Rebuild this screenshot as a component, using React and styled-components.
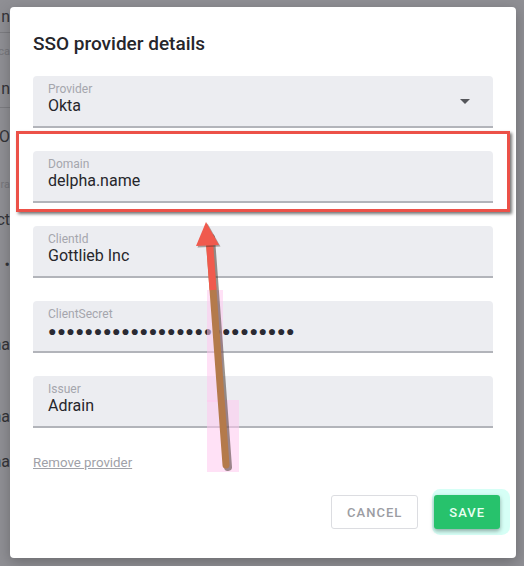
import React from 'react';
import styled, { createGlobalStyle } from 'styled-components';

const Global = createGlobalStyle`
  html, body { margin: 0; padding: 0; }
  body { font-family: Roboto, "Liberation Sans", sans-serif; }
`;

const Screen = styled.div`
  position: relative;
  width: 524px;
  height: 566px;
  overflow: hidden;
  background: #8f8f94;
`;

const BgColumn = styled.div`
  position: absolute;
  left: 0;
  top: 0;
  width: 10px;
  height: 566px;
  overflow: hidden;
  display: flex;
  flex-direction: column;
`;

const BgItem = styled.div`
  height: ${p => p.h}px;
  display: flex;
  align-items: center;
  justify-content: flex-end;
  white-space: nowrap;
  font-size: ${p => p.small ? 11 : 16}px;
  color: ${p => p.small ? '#76767b' : '#343438'};
  border-bottom: ${p => p.line ? '1px solid #7c7c81' : 'none'};
`;

const Modal = styled.div`
  position: absolute;
  left: 10px;
  top: 7px;
  width: 506px;
  height: 551px;
  box-sizing: border-box;
  background: #fff;
  border-radius: 4px;
  box-shadow: 0 4px 14px rgba(0,0,0,0.25);
  padding: 25px 16px 29px 23px;
  display: flex;
  flex-direction: column;
`;

const Title = styled.h2`
  margin: 0 0 20px;
  font-size: 19px;
  line-height: 24px;
  font-weight: 500;
  color: #26262b;
`;

const Fields = styled.div`
  width: 460px;
  display: flex;
  flex-direction: column;
  gap: 23px;
`;

const FieldBox = styled.div`
  position: relative;
  height: 52px;
  box-sizing: border-box;
  padding: 6px 15px 0;
  background: #ecedf1;
  border-radius: 4px 4px 0 0;
  border-bottom: 2px solid #b2b4ba;
`;

const Label = styled.div`
  font-size: 12px;
  line-height: 14px;
  color: #a5a6ad;
`;

const Value = styled.div`
  font-size: ${p => p.secret ? 14 : 16}px;
  line-height: 20px;
  color: ${p => p.secret ? '#2a2a33' : '#26262b'};
  letter-spacing: ${p => p.secret ? '0.7px' : '0'};
`;

const Caret = styled.div`
  position: absolute;
  right: 23px;
  top: 23px;
  width: 0;
  height: 0;
  border-left: 5px solid transparent;
  border-right: 5px solid transparent;
  border-top: 5px solid #55565b;
`;

const RemoveLink = styled.a`
  margin-top: 27px;
  align-self: flex-start;
  font-size: 13.3px;
  line-height: 16px;
  color: #a0a1a8;
  text-decoration: underline;
`;

const Actions = styled.div`
  margin-top: auto;
  display: flex;
  justify-content: flex-end;
  gap: 16px;
`;

const Button = styled.button`
  position: relative;
  height: 34px;
  box-sizing: border-box;
  padding: 0 15px;
  border-radius: 3px;
  font-family: Roboto, "Liberation Sans", sans-serif;
  font-size: 13px;
  font-weight: 500;
  letter-spacing: 1px;
  border: ${p => p.primary ? 'none' : '1px solid #dcdde1'};
  background: ${p => p.primary ? '#27c26c' : '#fff'};
  color: ${p => p.primary ? '#e9fff2' : '#9c9da3'};
  box-shadow: ${p => p.primary
    ? '0 2px 4px rgba(0,0,0,0.35), 4px 0 0 6px #d6fff6'
    : 'none'};
`;

const Highlight = styled.div`
  position: absolute;
  left: 16px;
  top: 131px;
  width: 494px;
  height: 81px;
  box-sizing: border-box;
  border: 3px solid #ec5148;
  box-shadow: 2px 2px 3px rgba(0,0,0,0.55);
  pointer-events: none;
`;

const Annotation = styled.svg`
  position: absolute;
  left: 0;
  top: 0;
  pointer-events: none;
`;

const Field = ({ label, value, secret, select }) => (
  <FieldBox>
    <Label>{label}</Label>
    <Value secret={secret}>{value}</Value>
    {select && <Caret />}
  </FieldBox>
);

export default function App() {
  return (
    <Screen>
      <Global />
      <BgColumn>
        <BgItem h={32} line>n</BgItem>
        <BgItem h={36} small>ca</BgItem>
        <BgItem h={38} line>n</BgItem>
        <BgItem h={56}>O</BgItem>
        <BgItem h={40} small>ra</BgItem>
        <BgItem h={30}>ct</BgItem>
        <BgItem h={60}>•</BgItem>
        <BgItem h={100}>na</BgItem>
        <BgItem h={44}>na</BgItem>
        <BgItem h={46}>na</BgItem>
      </BgColumn>

      <Modal>
        <Title>SSO provider details</Title>
        <Fields>
          <Field label="Provider" value="Okta" select />
          <Field label="Domain" value="delpha.name" />
          <Field label="ClientId" value="Gottlieb Inc" />
          <Field label="ClientSecret" value={'\u25CF'.repeat(27)} secret />
          <Field label="Issuer" value="Adrain" />
        </Fields>
        <RemoveLink>Remove provider</RemoveLink>
        <Actions>
          <Button>CANCEL</Button>
          <Button primary>SAVE</Button>
        </Actions>
      </Modal>

      <Highlight />

      <Annotation width="524" height="566" viewBox="0 0 524 566">
        <rect x="207" y="290" width="16" height="112" fill="#ffc8ee" opacity="0.55" />
        <rect x="207" y="400" width="32" height="72" fill="#ffc8ee" opacity="0.55" />
        <line x1="228" y1="467" x2="211" y2="238" stroke="#3a2a20" strokeWidth="8" strokeLinecap="round" opacity="0.5" />
        <line x1="226" y1="465" x2="209" y2="236" stroke="#b47a4b" strokeWidth="7" strokeLinecap="round" />
        <line x1="213" y1="290" x2="209" y2="236" stroke="#f05a4d" strokeWidth="7" />
        <polygon points="206,222 219,245 196,246" fill="#3a2a20" opacity="0.4" transform="translate(1.5,1.5)" />
        <polygon points="206,222 219,245 196,246" fill="#f05a4d" />
      </Annotation>
    </Screen>
  );
}
